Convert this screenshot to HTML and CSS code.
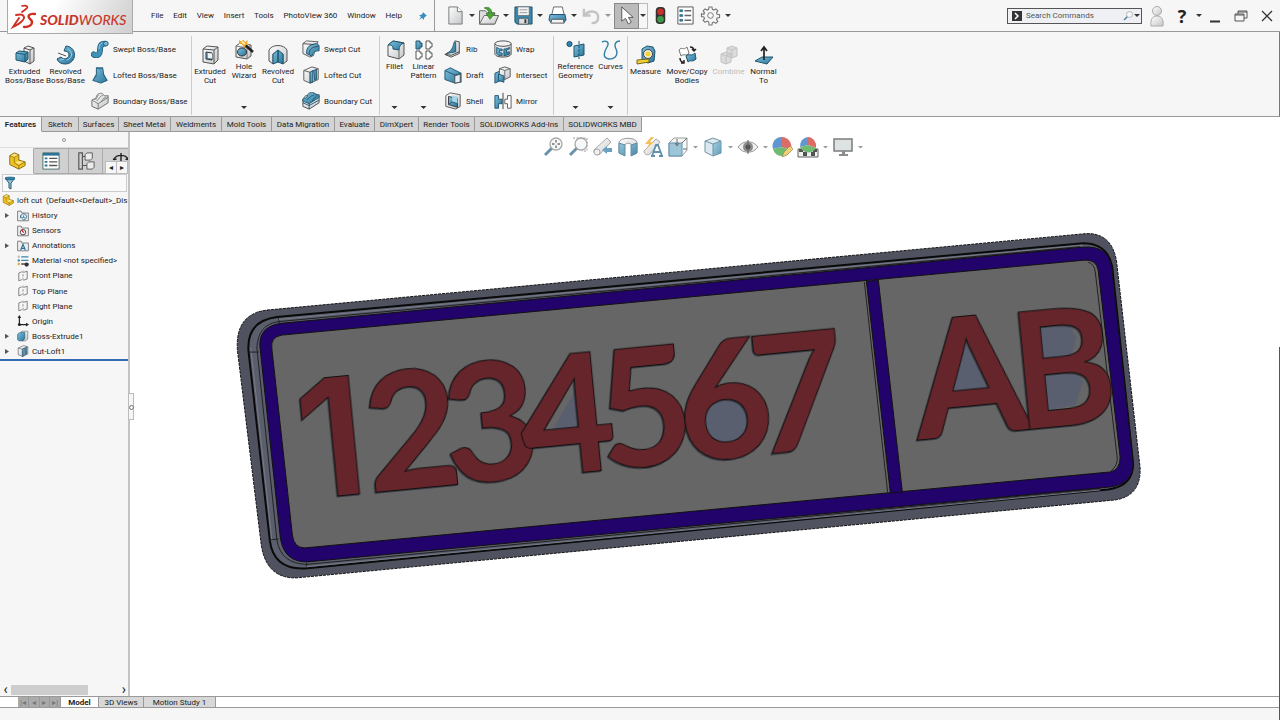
FILE: index.html
```html
<!DOCTYPE html>
<html lang="en">
<head>
<meta charset="utf-8">
<title>SOLIDWORKS - loft cut</title>
<link rel="stylesheet" href="styles.css">
</head>
<body>
<svg class="defs" aria-hidden="true">
  <defs>
    <linearGradient id="blue" x1="0" y1="0" x2="1" y2="1"><stop offset="0" stop-color="#7fc0de"/><stop offset="1" stop-color="#2a7499"/></linearGradient>
    <linearGradient id="grey" x1="0" y1="0" x2="1" y2="1"><stop offset="0" stop-color="#fff"/><stop offset="1" stop-color="#c4c6c8"/></linearGradient>
  </defs>
  <symbol id="i-part" viewBox="0 0 20 20"><path d="M2 4l5-3 5 2v6l7 2v4l-7 4-10-5z" fill="#f2c21c" stroke="#7d6414" stroke-linejoin="round"/><path d="M2 4l5 2 5-3M7 6v6l5 3 7-4M12 15v4" fill="none" stroke="#9a7a12"/><path d="M3 4l4-2 4 1.200-4 2zM8 11.500l4-1.500 5 1.200-5 2.600z" fill="#fbe387"/></symbol>
  <symbol id="i-extrude" viewBox="0 0 20 20"><path d="M9 3l4-2 6 2v13l-4 3-6-3z" fill="url(#grey)" stroke="#555"/><path d="M15 5l4-2M15 5v14M9 3l6 2" fill="none" stroke="#555"/><path d="M1 8l3-2 9 1v7l-3 3-9-2z" fill="url(#blue)" stroke="#1d556f"/><path d="M1 8l9 1.500 3-2M10 9.500V17" fill="none" stroke="#1d556f"/></symbol>
  <symbol id="i-revolve" viewBox="0 0 20 20"><path d="M10 1c12 1 11 18-1 18-4 0-7-2-8-5l4-2c2 3 8 2 8-2 0-3-2-4-5-4z" fill="url(#blue)" stroke="#1d556f"/><path d="M12 4c5 3 5 9-1 11M4 15l4-1" fill="none" stroke="#9fd2e8"/><path d="M2 8l8 3" stroke="#555"/></symbol>
  <symbol id="i-sweep" viewBox="0 0 20 20"><path d="M3 16c5 3 7-1 7-5 0-4 1-7 5-7" fill="none" stroke="#1d556f" stroke-width="6.500" stroke-linecap="round"/><path d="M3 16c5 3 7-1 7-5 0-4 1-7 5-7" fill="none" stroke="#3f91b8" stroke-width="5" stroke-linecap="round"/><circle cx="16.500" cy="4" r="2.600" fill="#78b9d6" stroke="#1d556f"/><path d="M9 10c0-4 1-6 4-7" stroke="#9fd2e8" fill="none"/></symbol>
  <symbol id="i-loft" viewBox="0 0 20 20"><path d="M6 2h7l1 7 4 7-7 3-9-3 4-7z" fill="url(#blue)" stroke="#1d556f"/><path d="M6 2l4 1.500L13 2M2 16l5-6M18 16l-5-7" fill="none" stroke="#2b6d8c"/></symbol>
  <symbol id="i-boundary" viewBox="0 0 20 20"><path d="M1 9c2-2 4 0 5-4 1-4 6-4 7-3s0 3 6 2v8l-11 7-7-3z" fill="url(#grey)" stroke="#666"/><path d="M1 9l7 4 11-7M8 13v6M6 9c3 1 3-5 7-5M3 8c4 1 3-3 6-5M11 11c2-1 2-5 6-5" fill="none" stroke="#777"/></symbol>
  <symbol id="i-boundcut" viewBox="0 0 20 20"><path d="M1 8l3-4 6 1 3-4 6 3v8l-11 7-7-3z" fill="url(#grey)" stroke="#444"/><path d="M1 8c2-2 4 0 5-4 1-4 6-4 7-3s0 3 6 2v3L8 13 1 10z" fill="url(#blue)" stroke="#1d556f"/><path d="M1 12l7 3 11-6M8 13v6M5 8c3 1 4-5 8-4M11 10c2-1 2-4 5-5" fill="none" stroke="#1d556f"/></symbol>
  <symbol id="i-excut" viewBox="0 0 20 20"><path d="M3 4l4-3 11 1v13l-4 4-11-2z" fill="url(#grey)" stroke="#555"/><path d="M3 4l11 1 4-3M14 5v14" fill="none" stroke="#555"/><path d="M6 7l6 1v7l-6-1z" fill="url(#blue)" stroke="#333"/><path d="M8 8l4 .5v5L8 13z" fill="#eef3f5"/></symbol>
  <symbol id="i-hole" viewBox="0 0 20 20"><path d="M2 6l4-3 11 2v11l-4 3-11-2z" fill="url(#grey)" stroke="#555"/><path d="M2 6l11 2 4-3M13 8v11" fill="none" stroke="#777"/><ellipse cx="8" cy="12" rx="4.500" ry="4" fill="url(#blue)" stroke="#333"/><path d="M9 3l10 9" stroke="#222" stroke-width="2.500"/><path d="M5 0l3 2 1-3 2 3 3-2-1 3 2 2-3 0-2 3-2-4-3 0z" fill="#f2a52a"/><path d="M8 2l3 2" stroke="#fff4a0" stroke-width="2"/></symbol>
  <symbol id="i-revcut" viewBox="0 0 20 20"><path d="M1 5c3-6 15-6 18 0v11l-4 3V9L10 7 5 9v10l-4-3z" fill="url(#grey)" stroke="#555"/><path d="M5 9l5-4v12l-5 2zM15 9l-5-4v12l5 2z" fill="url(#blue)" stroke="#1d556f"/></symbol>
  <symbol id="i-sweepcut" viewBox="0 0 20 20"><path d="M1 4l4-3 13 1-3 5-2 10-4 2-8-4z" fill="url(#grey)" stroke="#555"/><path d="M5 15C5 8 8 5 16 4l3 2v6c-5 0-7 2-8 6z" fill="url(#blue)" stroke="#1d556f"/><path d="M8 16c0-6 3-8 10-9M1 4l12 1" fill="none" stroke="#444"/></symbol>
  <symbol id="i-loftcut" viewBox="0 0 20 20"><path d="M2 5l9-4 7 2v12l-9 4-7-3z" fill="url(#grey)" stroke="#555"/><path d="M2 5l7 2 9-4M9 7v12" fill="none" stroke="#555"/><path d="M9 7l3-2v13l-3 1zM13 5l3-1v11l-2 1z" fill="url(#blue)" stroke="#1d556f"/></symbol>
  <symbol id="i-fillet" viewBox="0 0 20 20"><path d="M3 5l5-4 11 2v12l-5 4-11-3z" fill="url(#grey)" stroke="#555"/><path d="M3 5l5-4 11 2c-3 1-5 3-5 7L8 9c0-3-1-4-5-4z" fill="url(#blue)" stroke="#1d556f"/><path d="M14 9v10" stroke="#666"/></symbol>
  <symbol id="i-pattern" viewBox="0 0 20 20"><path d="M2 1h4v2h2v4H6v2H2z" fill="url(#blue)" stroke="#1d556f"/><path d="M12 1h4v2h2v4h-2v2h-4zM2 11h4v2h2v4H6v2H2zM12 11h4v2h2v4h-2v2h-4z" fill="#fff" stroke="#555"/></symbol>
  <symbol id="i-rib" viewBox="0 0 20 20"><path d="M12 1l5 1v13l-9 4-7-3 6-3 5-2z" fill="url(#grey)" stroke="#444"/><path d="M13 3v10L3 15c5-3 7-6 8-12z" fill="url(#blue)" stroke="#1d556f"/><path d="M1 16l7 1 9-4" fill="none" stroke="#444"/></symbol>
  <symbol id="i-draft" viewBox="0 0 20 20"><path d="M1 5l6-3 12 6v10l-7 1-11-4z" fill="url(#blue)" stroke="#1d556f"/><path d="M1 5l11 5 7-2M12 10v9" fill="none" stroke="#1d556f"/><path d="M12 11l6-2v9l-6 1z" fill="#e8eef1" stroke="#555"/></symbol>
  <symbol id="i-shell" viewBox="0 0 20 20"><path d="M2 4l5-3 11 2v13l-5 3-11-3z" fill="url(#grey)" stroke="#555"/><path d="M5 5l10 2v10L5 14z" fill="url(#blue)" stroke="#333"/><path d="M9 4l6 1v8l-6-2z" fill="#a6d3e7"/><path d="M5 14l4-3 6 2" fill="none" stroke="#1d556f"/></symbol>
  <symbol id="i-wrap" viewBox="0 0 20 20"><path d="M1 4v12c2 4 16 4 18 0V4z" fill="url(#grey)" stroke="#444"/><ellipse cx="10" cy="4" rx="9" ry="3" fill="#f3f3f3" stroke="#444"/><path d="M3 8c2 2 4 2 6 2v2l-3-.5V14l3 .5v3c-3 0-5-1-6-2zM11 10c3 0 5-1 6-2v2l-3 1v3l3-1v3l-6 1.500z" fill="url(#blue)" stroke="#1d556f"/></symbol>
  <symbol id="i-intersect" viewBox="0 0 20 20"><path d="M1 8l7-3v11l-7 3z" fill="url(#blue)" stroke="#1d556f"/><path d="M6 3l6-2 6 2v9l-6 3-6-3z" fill="url(#grey)" stroke="#555"/><path d="M6 3l6 2 6-2M12 5v10" fill="none" stroke="#666"/><path d="M5 9l6 2v7l-6-2z" fill="url(#blue)" stroke="#1d556f"/></symbol>
  <symbol id="i-mirror" viewBox="0 0 20 20"><path d="M1 4h4v4h4v5H5v5H1z" fill="url(#blue)" stroke="#1d556f"/><path d="M10 1v18" stroke="#333"/><path d="M19 4h-4v4h-3v5h3v5h4z" fill="#fff" stroke="#555"/></symbol>
  <symbol id="i-refgeo" viewBox="0 0 20 20"><circle cx="3.500" cy="4" r="2.600" fill="#2f83ab" stroke="#1d556f"/><path d="M8 6l10-2v11L8 17z" fill="url(#blue)" stroke="#1d556f"/><path d="M13 1v18" stroke="#1d556f" stroke-dasharray="3 1"/></symbol>
  <symbol id="i-curves" viewBox="0 0 20 20"><path d="M1 2c4-2 8 0 5 5s-5 11 2 12c8 0 9-6 7-10s-1-8 4-8" fill="none" stroke="#2f7fa5" stroke-width="1.400"/></symbol>
  <symbol id="i-measure" viewBox="0 0 20 20"><path d="M6 4l5-3 6 1 2 4-1 10-6 2-6-2z" fill="url(#blue)" stroke="#1d556f"/><circle cx="12" cy="9" r="4.500" fill="#f1efe2" stroke="#444"/><circle cx="12" cy="9" r="2.500" fill="#f2d231"/><path d="M1 15l12-1v3L1 19z" fill="#f2d231" stroke="#75661a"/></symbol>
  <symbol id="i-move" viewBox="0 0 20 20"><path d="M2 5c3-4 4 1 8-3l2 6c-3 4-5 0-8 3z" fill="#fff" stroke="#777"/><path d="M9 11c3-3 5 1 9-3l1 6c-4 4-5 0-8 3z" fill="url(#blue)" stroke="#1d556f"/><path d="M13 2c3 0 4 1 4 4m-2-2l2 2 2-2M3 13c0 3 1 4 4 5m-3 0h3v-3" fill="none" stroke="#222" stroke-width="1.500"/></symbol>
  <symbol id="i-combine" viewBox="0 0 20 20"><path d="M8 3l5-2 5 2v8l-5 2-5-2zM2 9l5-2 5 2v8l-5 2-5-2z" fill="#dcdcdc" stroke="#c2c2c2"/><path d="M8 3l5 2 5-2M13 5v8M2 9l5 2 5-2M7 11v8" fill="none" stroke="#c2c2c2"/></symbol>
  <symbol id="i-normal" viewBox="0 0 20 20"><path d="M1 16l7-4h11l-6 7z" fill="url(#blue)" stroke="#1d556f"/><path d="M10 15V3M7 6l3-4 3 4" fill="none" stroke="#222" stroke-width="1.700"/></symbol>
  <symbol id="i-list" viewBox="0 0 20 20"><path d="M2 1h16v18H2z" fill="#fff" stroke="#555"/><path d="M4 4h3v2H4zM4 9h3v2H4zM4 14h3v2H4z" fill="#2f83ab" stroke="#1d556f" stroke-width=".6"/><path d="M9 5h7M9 10h7M9 15h7" stroke="#666" stroke-width="1.500"/></symbol>
  <symbol id="i-props" viewBox="0 0 20 20"><path d="M1 1h18v18H1z" fill="#fff" stroke="#466"/><path d="M1 1h18v3H1z" fill="#2a7499"/><path d="M3 7h3M3 11h3M3 15h3" stroke="#2a7499" stroke-width="2"/><path d="M8 7h9M8 11h9M8 15h9" stroke="#555" stroke-width="1.500"/></symbol>
  <symbol id="i-config" viewBox="0 0 20 20"><path d="M2 1h4v18H2zM6 5h4M6 15h5" fill="none" stroke="#555" stroke-width="1.300"/><path d="M9 3l2-2h6v6l-2 2H9zM11 13l2-2h6v6l-2 2h-6z" fill="#ececec" stroke="#555"/></symbol>
  <symbol id="i-folder" viewBox="0 0 20 20"><path d="M1 18V2h6l1 3h11v13z" fill="#eee" stroke="#777" stroke-width="1.500"/></symbol>
  <symbol id="i-plane" viewBox="0 0 20 20"><path d="M8 3L3 5v13l5-2M11 4l6-2v13l-6 2" fill="none" stroke="#777" stroke-width="1.500"/><path d="M10 1v18" stroke="#888" stroke-width="1.500" stroke-dasharray="4 2"/></symbol>
  <symbol id="i-glass" viewBox="0 0 20 20"><path d="M9 11l-7 7" stroke="#4f819b" stroke-width="3"/><circle cx="13" cy="7" r="6" fill="#f6f8f9" stroke="#999" stroke-width="1.300"/></symbol>
</svg>

<div class="app">
  <header class="titlebar">
    <div class="logo">
      <svg class="ds" viewBox="0 0 24 24" aria-hidden="true"><g fill="none" stroke="#cf2e20" stroke-linecap="round"><path d="M10 1c5-1 7 1 4 3L10 7" stroke-width="1.700"/><path d="M4 10c9-2 10 3 5 7-3 3-6 4-8 5l6-9" stroke-width="1.900"/><path d="M23 9c-6-1-8 2-5 5 4 3 2 8-6 8" stroke-width="2.300"/></g></svg>
      <span class="brand"><b>SOLID</b>WORKS</span>
    </div>
    <nav class="menu">
      <button>File</button><button>Edit</button><button>View</button><button>Insert</button><button>Tools</button><button>PhotoView 360</button><button>Window</button><button>Help</button>
    </nav>
    <button class="pin" aria-label="Pin menu"><svg viewBox="0 0 10 10"><path d="M5 1l4 4-1 0-2 2 0 2-2-2-3 2 2-3-2-2 2 0 2-2z" fill="#3a8fc0"/></svg></button>
    <div class="quick">
      <button class="q" aria-label="New"><svg viewBox="0 0 20 20"><path d="M3 1h9l5 5v13H3z" fill="url(#grey)" stroke="#777"/><path d="M12 1v5h5" fill="#fff" stroke="#777"/></svg></button><i class="dd"></i>
      <button class="q" aria-label="Open"><svg class="wide" viewBox="0 0 22 20"><path d="M1 19V5h6l2 2h8v3h4l-4 9z" fill="#ddd" stroke="#666"/><path d="M1 19l5-9h15l-4 9z" fill="url(#grey)" stroke="#666"/><path d="M6 2c6-2 8 2 8 6h3l-5 6-4-6h3c0-3-2-5-5-6z" fill="#4aa832" stroke="#2b6e1b" stroke-width=".7"/></svg></button><i class="dd"></i>
      <button class="q" aria-label="Save"><svg viewBox="0 0 20 20"><path d="M1 1h18v18H3l-2-2z" fill="#3d87ab" stroke="#1f4f68"/><path d="M4 1h12v9H4z" fill="#f4f4f4" stroke="#555" stroke-width=".6"/><path d="M5 13h10v6H5z" fill="#ddd" stroke="#333" stroke-width=".6"/><path d="M6 4h8M6 7h8" stroke="#999"/><path d="M11 14h2v4h-2z" fill="#333"/></svg></button><i class="dd"></i>
      <button class="q" aria-label="Print"><svg viewBox="0 0 20 20"><path d="M4 9l2-8h9l2 8z" fill="#fff" stroke="#666"/><path d="M2 9h16l1 6-2 2H3l-2-2z" fill="url(#blue)" stroke="#1d4f68"/><path d="M4 14h12l1 4H3z" fill="#f4f4f4" stroke="#555"/></svg></button><i class="dd"></i>
      <button class="q" aria-label="Undo" disabled><svg viewBox="0 0 20 20"><path d="M2 3v7h7M3 9c5-5 14-4 14 3 0 4-3 6-7 6" fill="none" stroke="#c3c3c3" stroke-width="2.500"/></svg></button><i class="dd pale"></i>
      <button class="q sel" aria-label="Select"><svg viewBox="0 0 20 20"><path d="M5 1v15l4-3 3 6 3-2-3-5h5z" fill="#fff" stroke="#555"/></svg></button><span class="boxed"><i class="dd"></i></span>
      <button class="q w24" aria-label="Rebuild"><svg viewBox="0 0 20 20"><rect x="5" y="1" width="10" height="18" rx="4" fill="#333"/><circle cx="10" cy="6" r="3.500" fill="#c9312b"/><circle cx="10" cy="14" r="3.500" fill="#3f9a45"/></svg></button>
      <button class="q w26" aria-label="File properties"><svg><use href="#i-list"/></svg></button>
      <button class="q w24" aria-label="Options"><svg viewBox="0 0 20 20"><g fill="none" stroke="#777"><circle cx="10" cy="10" r="3"/><path d="M8.500 1h3l.5 2.500 1.500.7L15.700 3l2 2-1.400 2.200.7 1.500 2.500.4v3l-2.500.5-.7 1.500 1.400 2.100-2 2-2.200-1.300-1.500.7-.5 2.400h-3L8 16.600l-1.500-.7-2.200 1.300-2-2 1.400-2.100-.7-1.500-2.500-.5v-3L3 8.700l.7-1.500L2.300 5l2-2 2.200 1.200L8 3.500z" stroke-width="1.200"/></g></svg></button><i class="dd"></i>
    </div>
    <div class="search">
      <svg viewBox="0 0 10 10" aria-hidden="true"><path d="M0 0h10v10H0z" fill="#333"/><path d="M3 2l3 3-3 3" fill="none" stroke="#fff" stroke-width="1.500"/></svg>
      <input type="text" placeholder="Search Commands" aria-label="Search Commands">
      <svg viewBox="0 0 20 20" aria-hidden="true"><use href="#i-glass"/></svg><i class="dd"></i>
    </div>
    <div class="window">
      <button class="w-user" aria-label="Account"><svg viewBox="0 0 14 22"><path d="M1 21c-1-7 2-10 6-10s7 3 6 10z" fill="url(#grey)" stroke="#aaa"/><circle cx="7" cy="6" r="4.500" fill="url(#grey)" stroke="#aaa"/></svg></button>
      <button class="w-help" aria-label="Help">?</button><i class="dd"></i>
      <button class="w-min" aria-label="Minimize"><svg viewBox="0 0 14 14"><path d="M2 12.500h10" stroke="#333" stroke-width="2"/></svg></button>
      <button class="w-btn" aria-label="Restore"><svg viewBox="0 0 14 14"><path d="M1 5h9v7H1zM1 6h9M4 5V2h9v7h-3M4 3h9" fill="none" stroke="#555"/></svg></button>
      <button class="w-btn" aria-label="Close"><svg viewBox="0 0 14 14"><path d="M2 2l10 10M12 2L2 12" stroke="#333" stroke-width="1.300"/></svg></button>
    </div>
  </header>

  <section class="ribbon" aria-label="Features">
    <div class="group g1">
      <button class="big"><svg><use href="#i-extrude"/></svg>Extruded<br>Boss/Base</button>
      <button class="big"><svg><use href="#i-revolve"/></svg>Revolved<br>Boss/Base</button>
      <div class="stack">
        <button><svg><use href="#i-sweep"/></svg>Swept Boss/Base</button>
        <button><svg><use href="#i-loft"/></svg>Lofted Boss/Base</button>
        <button><svg><use href="#i-boundary"/></svg>Boundary Boss/Base</button>
      </div>
    </div>
    <div class="group g2">
      <button class="big"><svg><use href="#i-excut"/></svg>Extruded<br>Cut</button>
      <button class="big drop"><svg><use href="#i-hole"/></svg>Hole<br>Wizard<i class="dd"></i></button>
      <button class="big"><svg><use href="#i-revcut"/></svg>Revolved<br>Cut</button>
      <div class="stack">
        <button><svg><use href="#i-sweepcut"/></svg>Swept Cut</button>
        <button><svg><use href="#i-loftcut"/></svg>Lofted Cut</button>
        <button><svg><use href="#i-boundcut"/></svg>Boundary Cut</button>
      </div>
    </div>
    <div class="group g3">
      <button class="big drop"><svg><use href="#i-fillet"/></svg>Fillet<i class="dd"></i></button>
      <button class="big drop"><svg><use href="#i-pattern"/></svg>Linear<br>Pattern<i class="dd"></i></button>
      <div class="stack s50">
        <button><svg><use href="#i-rib"/></svg>Rib</button>
        <button><svg><use href="#i-draft"/></svg>Draft</button>
        <button><svg><use href="#i-shell"/></svg>Shell</button>
      </div>
      <div class="stack s0">
        <button><svg><use href="#i-wrap"/></svg>Wrap</button>
        <button><svg><use href="#i-intersect"/></svg>Intersect</button>
        <button><svg><use href="#i-mirror"/></svg>Mirror</button>
      </div>
    </div>
    <div class="group g4">
      <button class="big drop"><svg><use href="#i-refgeo"/></svg>Reference<br>Geometry<i class="dd"></i></button>
      <button class="big drop"><svg><use href="#i-curves"/></svg>Curves<i class="dd"></i></button>
    </div>
    <div class="group g5">
      <button class="big"><svg><use href="#i-measure"/></svg>Measure</button>
      <button class="big"><svg><use href="#i-move"/></svg>Move/Copy<br>Bodies</button>
      <button class="big" disabled><svg><use href="#i-combine"/></svg>Combine</button>
      <button class="big"><svg><use href="#i-normal"/></svg>Normal<br>To</button>
    </div>
  </section>

  <nav class="tabs">
    <button class="on">Features</button><button>Sketch</button><button>Surfaces</button><button>Sheet Metal</button><button>Weldments</button><button>Mold Tools</button><button>Data Migration</button><button>Evaluate</button><button>DimXpert</button><button>Render Tools</button><button>SOLIDWORKS Add-Ins</button><button>SOLIDWORKS MBD</button>
  </nav>

  <div class="work">
    <aside class="panel">
      <div class="grip"><span></span></div>
      <div class="ptabs">
        <button class="on" aria-label="FeatureManager"><svg><use href="#i-part"/></svg></button>
        <button aria-label="PropertyManager"><svg><use href="#i-props"/></svg></button>
        <button aria-label="ConfigurationManager"><svg><use href="#i-config"/></svg></button>
        <button aria-label="DimXpertManager"><svg viewBox="0 0 20 20"><path d="M2 9c2-7 14-7 16 0M10 1v15M1 8h4M15 8h4" fill="none" stroke="#222" stroke-width="1.600"/></svg></button>
        <div class="pager"><button aria-label="Previous">◂</button><button aria-label="Next">▸</button></div>
      </div>
      <label class="filter"><svg viewBox="0 0 12 14" aria-hidden="true"><path d="M1 2h10L7 7v6l-2-1V7z" fill="#9cc8de" stroke="#235b75"/><ellipse cx="6" cy="2.500" rx="5" ry="1.500" fill="#3482a8" stroke="#235b75" stroke-width=".6"/></svg><input type="text" aria-label="Filter tree"></label>
      <div class="root"><svg><use href="#i-part"/></svg>loft cut &nbsp;(Default&lt;&lt;Default&gt;_Dis</div>
      <ul class="tree">
        <li class="exp"><svg viewBox="0 0 20 20"><use href="#i-folder"/><path d="M6 12a5 5 0 1 1 3 4M6 9v4h4M11 9v4h3" fill="none" stroke="#2a7499" stroke-width="1.500"/></svg>History</li>
        <li><svg viewBox="0 0 20 20"><use href="#i-folder"/><circle cx="10" cy="12" r="4.500" fill="#fff" stroke="#333" stroke-width="1.500"/><path d="M10 12l-2-4M10 12h2" stroke="#c22" stroke-width="2"/></svg>Sensors</li>
        <li class="exp"><svg viewBox="0 0 20 20"><use href="#i-folder"/><path d="M6 17l4-10 4 10M7 14h6" fill="none" stroke="#246f98" stroke-width="1.800"/></svg>Annotations</li>
        <li><svg viewBox="0 0 20 20"><path d="M7 3h12M7 9h12" stroke="#3b86ab" stroke-width="2"/><path d="M7 15h12" stroke="#222" stroke-width="2"/><circle cx="3" cy="3" r="2" fill="#bbb"/><circle cx="3" cy="9" r="2" fill="#3b86ab"/><circle cx="3" cy="15" r="2" fill="#dba92c"/><circle cx="16" cy="16" r="3.500" fill="#333"/></svg>Material &lt;not specified&gt;</li>
        <li><svg><use href="#i-plane"/></svg>Front Plane</li>
        <li><svg><use href="#i-plane"/></svg>Top Plane</li>
        <li><svg><use href="#i-plane"/></svg>Right Plane</li>
        <li><svg viewBox="0 0 20 20"><path d="M4 2v14h13" fill="none" stroke="#222" stroke-width="2"/><path d="M1 5l3-5 3 5zM15 13l5 3-5 3z" fill="#222"/><circle cx="4" cy="16" r="2.500" fill="#222"/></svg>Origin</li>
        <li class="exp"><svg viewBox="0 0 20 20"><path d="M8 2h10v13l-4 3H8z" fill="url(#grey)" stroke="#666"/><path d="M1 7l4-3h8v10l-3 4H3l-2-2z" fill="url(#blue)" stroke="#1d556f"/></svg>Boss-Extrude1</li>
        <li class="exp"><svg><use href="#i-loftcut"/></svg>Cut-Loft1</li>
      </ul>
      <div class="rest"></div>
      <div class="hscroll"><span>‹</span><div></div><span>›</span></div>
      <button class="handle" aria-label="Collapse panel"></button>
    </aside>

    <main class="canvas">
      <div class="hud">
        <button aria-label="Zoom to fit"><svg viewBox="0 0 20 20"><use href="#i-glass"/><path d="M13 3v8M9 7h8" stroke="#555" stroke-width="1.400" stroke-dasharray="2.500 3"/></svg></button>
        <button aria-label="Zoom to area"><svg viewBox="0 0 20 20"><path d="M5 1h14v13h-5" fill="none" stroke="#888" stroke-dasharray="2 1.500"/><use href="#i-glass"/></svg></button>
        <button aria-label="Previous view"><svg viewBox="0 0 20 20"><path d="M1 13L14 1l4 4L7 17c-3 2-7 0-6-4z" fill="url(#grey)" stroke="#999"/><circle cx="4" cy="15" r="3" fill="#eee" stroke="#999"/><path d="M9 13l5-4v2h5v4h-5v2z" fill="#4f92b4"/></svg></button>
        <button aria-label="Section view"><svg viewBox="0 0 20 20"><path d="M1 5c2-5 16-5 18 0v11l-4 2V8L10 6 6 8v10l-5-2z" fill="url(#grey)" stroke="#888"/><path d="M1 6l6 2v11l-6-3zM13 8l6-2v10l-6 3z" fill="url(#blue)" stroke="#4a7c95"/></svg></button>
        <button aria-label="Annotation view"><svg viewBox="0 0 20 20"><path d="M1 14L13 2l4 3L7 17c-3 2-6 0-6-3z" fill="url(#grey)" stroke="#999"/><path d="M8 0L2 7h4l-3 5 8-7H7l4-5z" fill="#f1b53c"/><path d="M9 19l4-11h2l4 11M11 15h6M8 19h4M16 19h4" fill="none" stroke="#427f9f" stroke-width="1.800"/></svg></button>
        <button aria-label="View orientation"><svg viewBox="0 0 20 20"><path d="M1 6l5-5h13v12l-5 6H1z" fill="#f5f5f5" stroke="#888"/><path d="M1 6h13v13H1z" fill="#8dbcd2" stroke="#427f9f"/><path d="M14 6l5-5M9 2v6M7 6l2 3 2-3M19 12h-4" fill="none" stroke="#555"/></svg></button><i class="dd pale"></i>
        <button aria-label="Display style"><svg viewBox="0 0 20 20"><path d="M2 4l8-3 8 3v12l-8 3-8-4z" fill="#d4e5ed" stroke="#5a8095"/><path d="M10 7l8-3v12l-8 3z" fill="url(#blue)" opacity=".8"/><path d="M2 4l8 3 8-3M10 7v12" fill="none" stroke="#5a8095"/></svg></button><i class="dd pale"></i>
        <button aria-label="Hide/show"><svg viewBox="0 0 20 20"><path d="M0 10c5-7 15-7 20 0-5 7-15 7-20 0z" fill="#eee" stroke="#888"/><circle cx="10" cy="10" r="5" fill="#777"/><circle cx="10" cy="10" r="2.500" fill="#333"/><path d="M10 3v14" stroke="#444"/></svg></button><i class="dd pale"></i>
        <button aria-label="Edit appearance"><svg viewBox="0 0 20 20"><path d="M9 10V0a9 9 0 0 0-9 12z" fill="#4686c9"/><path d="M9 10V0a10 10 0 0 1 9 13z" fill="#d9534c"/><path d="M9 10l9 3a9.500 9.500 0 0 1-18-1z" fill="#56ad58"/><path d="M9 20l2-5 6-6 3 3-6 6z" fill="#edc85c" stroke="#8a743a" stroke-width=".7"/></svg></button>
        <button aria-label="Apply scene"><svg viewBox="0 0 20 20"><path d="M0 12h20v8H0z" fill="#eee" stroke="#444"/><path d="M1 12h4v3H1zM15 12h4v3h-4zM5 15h4v4H5zM13 15h4v4h-4z" fill="#333"/><path d="M10 8V0a9 9 0 0 0-8 10z" fill="#4686c9"/><path d="M10 8V0a9 9 0 0 1 8 11z" fill="#d9534c"/><path d="M10 8l8 3a9 9 0 0 1-16-1z" fill="#56ad58"/></svg></button><i class="dd pale"></i>
        <button aria-label="View settings"><svg viewBox="0 0 20 20"><path d="M1 2h18v12H1z" fill="#d8dddf" stroke="#666" stroke-width="1.500"/><path d="M9 14h3v3h3v2H6v-2h3z" fill="#777"/></svg></button><i class="dd pale"></i>
      </div>
      <svg class="model" viewBox="129 162 1151 534" preserveAspectRatio="xMidYMid meet" role="img" aria-label="Number plate 1234567 AB">
        <path class="rim" d="M266 310L1085 233.500Q1112 232 1116.500 262L1140 468Q1141 496 1115 500L296 578Q266 579 260.500 546L236.500 350Q234 314 266 310Z"/>
        <path class="bevel" d="M276 317L1083 243Q1107 243 1112 266L1133 464Q1133 486 1108 489.500L304 568.500Q273 570 269 541L247.500 350Q246 321 276 317Z"/>
        <path class="ridge" d="M276 319.500L1083 245M304 567L1100 490M250 348L271 541"/>
        <path class="groove" d="M278 321.500L1080 246.500M306 564.500L1100 488.500M256 348Q257 324 278 321.500M256 348L276 540Q280 564 306 564.500M277 318l2 5M249 352h9M270 540l8-1M306 563l-1 5"/>
        <path class="border" d="M283 323L1083 247Q1108 245 1111.500 267L1133 463Q1133 484 1110 487L306 562Q283 562 279.500 538L259 346Q258 325 283 323Z"/>
        <path class="face" d="M281 335L1084 260Q1096 259 1098 270L1120 457Q1120 470 1110 472L304 548Q293 548 291.500 535L271 349Q269 337 281 335Z"/>
        <path class="edge" d="M1088 262q6 2 7 9l22 186q1 8-6 14M864 282l23.500 212"/>
        <path class="border" d="M866 281l12-1 24 212-12 1z"/>
        <g class="well"><circle cx="727" cy="424" r="26"/><path d="M577 386l6 50-36 3zM963 336l-18 58 44-4zM1034 322l32-3 10 18-6 25 13 20-8 23-34 6z"/></g>
        <g transform="translate(332 496) rotate(-5.500)">
          <text class="relief" y="0"><tspan class="one" x="4">1</tspan><tspan x="85">2</tspan><tspan x="164">3</tspan><tspan x="241">4</tspan><tspan x="319">5</tspan><tspan x="399">6</tspan><tspan x="493">7</tspan> <tspan x="646">A</tspan><tspan class="bee" x="740">B</tspan></text>
        </g>
      </svg>
    </main>
  </div>

  <footer class="bottom">
    <div class="nav"><button aria-label="First">|◂</button><button aria-label="Back">◂</button><button aria-label="Forward">▸</button><button aria-label="Last">▸|</button></div>
    <button class="on">Model</button><button>3D Views</button><button>Motion Study 1</button>
  </footer>
  <div class="status"></div>
</div>
</body>
</html>
```
FILE: styles.css
```css
* { box-sizing: border-box; }
body { margin: 0; font: 8px/9px Roboto, "Open Sans", sans-serif; color: #222; }
button { border: 0; padding: 0; margin: 0; background: none; font: inherit; color: inherit; white-space: nowrap; }
input { border: 0; padding: 0; background: none; font: inherit; min-width: 0; outline: 0; }
svg { display: block; flex: none; overflow: visible; }
.defs { position: absolute; width: 0; height: 0; }
.app { position: relative; min-height: 100vh; display: flex; flex-direction: column; background: #f6f6f6; }
.app::after { content: ""; position: absolute; right: 0; top: 347px; bottom: 0; width: 1px; background: #555; }

.dd { display: block; flex: none; width: 12px; height: 3px; background: #333; clip-path: polygon(calc(50% - 3px) 0, calc(50% + 3px) 0, 50% 100%); }
.dd.pale { opacity: .5; }

.titlebar { display: flex; align-items: center; height: 32px; border-bottom: 1px solid #999; }
.logo { display: flex; align-items: center; align-self: flex-start; gap: 4px; width: 126px; height: 34px; margin-left: 7px; padding: 0 4px; background: linear-gradient(115deg, #fff 35%, #cfcfcf); border: 1px solid #aaa; border-top: 0; z-index: 1; }
.ds { width: 24px; height: 24px; }
.brand { font: 500 14px/18px Lato, sans-serif; font-style: italic; color: #c8352b; padding-top: 6px; }
.brand b { font-weight: 900; }
.menu { display: flex; justify-content: space-between; width: 251px; margin-left: 18px; height: 32px; }
.pin { width: 10px; margin-left: 16px; }
.pin svg { width: 10px; height: 10px; }
.quick { display: flex; align-items: center; align-self: stretch; margin-left: 6px; padding-left: 9px; border-left: 1px solid #999; }
.q { display: flex; align-items: center; justify-content: center; width: 22px; height: 26px; }
.q svg { width: 19px; height: 19px; }
.q .wide { width: 22px; }
.q.sel { width: 25px; background: #bbb; border: 1px solid #888; }
.boxed { display: flex; align-items: center; width: 9px; height: 26px; border: 1px solid #bbb; border-left: 0; }
.boxed .dd { width: 8px; }
.q.w26 { width: 26px; }
.q.w24 { width: 24px; }
.search { display: flex; align-items: center; width: 135px; height: 16px; margin-left: auto; padding-left: 4px; border: 1px solid #555; background: #eef0f4; gap: 4px; }
.search svg { width: 10px; height: 10px; }
.search input { flex: 1; }
.search .dd { width: 8px; margin-left: -4px; }
.search input::placeholder { color: #555; opacity: 1; }
.window { display: flex; align-items: center; margin-left: 8px; padding-right: 6px; }
.window svg { width: 14px; height: 14px; }
.window .w-user svg { height: 22px; }
.w-help { width: 30px; margin-left: 3px; font: 700 18px/20px "Open Sans", sans-serif; }
.window .dd { margin: 0 3px 0 -4px; }
.w-btn { margin-left: 12px; }

.ribbon { display: flex; min-height: 85px; border-bottom: 1px solid #999; border-right: 1px solid #777; }
.group { display: flex; border-right: 1px solid #ccc; margin: 4px 0 1px; }
.big { display: flex; flex-direction: column; align-items: center; justify-content: flex-start; padding-top: 9px; text-align: center; }
.big svg { width: 20px; height: 20px; margin-bottom: 2px; }
.big.drop { padding-top: 4px; padding-bottom: 6px; }
.big .dd { margin-top: auto; }
.big:disabled { color: #bbb; }
.stack { display: grid; grid-template-rows: repeat(3, 26px); margin-left: 5px; }
.stack button { display: flex; align-items: center; gap: 4px; }
.stack svg { width: 18px; height: 18px; }
.g1 { width: 192px; padding-left: 4px; } .g1 .big { width: 41px; }
.g2 { width: 188px; padding-left: 1px; } .g2 .big { width: 34px; } .g2 .stack { margin-left: 7px; }
.g3 { width: 174px; } .g3 .big { width: 29px; } .g3 .stack { margin-left: 6px; }
.g3 .s50 { width: 50px; } .g3 .stack.s0 { margin-left: 0; }
.g4 { width: 74px; padding-left: 1px; } .g4 .big { width: 41px; } .g4 .big + .big { width: 29px; }
.g5 { border: 0; } .g5 .big { width: 35px; } .g5 .big:nth-child(2) { width: 48px; }

.tabs { display: grid; grid-template-columns: 42px 37px 40px 52px 51px 50px 63px 40px 44px 56px 89px 78px; height: 15px; background: #fff; }
.tabs button { background: #d4d4d4; border: solid #999; border-width: 0 1px 1px 0; }
.tabs .on { background: #f6f6f6; border-bottom-color: #f6f6f6; font-weight: 600; }

.work { display: flex; flex: 1; min-height: 0; }
.panel { position: relative; display: flex; flex-direction: column; width: 130px; border-right: 2px solid #c4c4c4; }
.grip { display: flex; align-items: center; justify-content: center; height: 16px; border-bottom: 1px solid #ddd; }
.grip span { width: 4px; height: 4px; border: 1px solid #999; border-radius: 50%; }
.ptabs { position: relative; display: grid; grid-template-columns: 34px 35px 34px 25px; height: 26px; overflow: hidden; }
.ptabs > button { display: flex; align-items: center; justify-content: center; background: #d0d0d0; border: 1px solid #aaa; border-left: 0; }
.ptabs > .on { background: #f6f6f6; border-color: #f6f6f6 #aaa #f6f6f6 transparent; }
.ptabs svg { width: 18px; height: 18px; }
.ptabs > button:nth-child(4) { padding-left: 10px; border-right: 0; }
.pager { position: absolute; right: 0; bottom: 0; display: flex; width: 23px; height: 13px; background: #f6f6f6; border: 1px solid #bbb; }
.pager button { flex: 1; }
.pager button + button { border-left: 1px solid #bbb; }
.filter { display: flex; align-items: center; height: 18px; margin: 0 1px 0 2px; padding-left: 1px; border: 1px solid #ccc; background: #fafafa; }
.filter svg { width: 12px; height: 14px; }
.filter input { flex: 1; }
.root { display: flex; align-items: center; gap: 3px; height: 16px; padding-left: 2px; white-space: nowrap; }
.root svg { width: 12px; height: 12px; }
.tree { display: grid; grid-auto-rows: 1fr; height: 153px; margin: 0; padding: 0; list-style: none; border-bottom: 2px solid #3569b3; }
.tree li { display: flex; align-items: center; gap: 3px; padding-left: 17px; white-space: nowrap; }
.tree li.exp { padding-left: 5px; }
.tree li.exp::before { content: ""; width: 4px; height: 5px; margin-right: 5px; background: #555; clip-path: polygon(0 0, 100% 50%, 0 100%); }
.tree svg { width: 12px; height: 12px; }
.rest { flex: 1; }
.hscroll { display: grid; grid-template-columns: 11px 77px 1fr; height: 12px; }
.hscroll div { background: #cdcdcd; margin: 1px 0; }
.hscroll span { text-align: center; font-size: 14px; line-height: 10px; }
.hscroll span:last-child { text-align: right; padding-right: 2px; }
.handle { position: absolute; right: -6px; top: 261px; width: 6px; height: 27px; background: #f6f6f6; border: 1px solid #bbb; }
.handle::after { content: ""; position: absolute; left: 0; top: 11px; width: 3px; height: 3px; border: 1px solid #777; border-radius: 50%; }

.canvas { display: flex; flex-direction: column; flex: 1; min-width: 0; background: #fff; }
.hud { display: flex; align-items: center; justify-content: center; height: 30px; padding-right: 4px; }
.hud button { display: flex; justify-content: center; width: 25px; }
.hud svg { width: 20px; height: 20px; opacity: .85; }
.hud .dd { width: 10px; }
.model { flex: 1; width: 100%; min-height: 0; }
.rim { fill: #50535f; stroke: #111; stroke-dasharray: 3 1; }
.bevel { fill: #5b5e6c; stroke: #0a0a0a; stroke-width: 2; }
.ridge { fill: none; stroke: #777b8a; stroke-width: 1; }
.groove { fill: none; stroke: #222; }
.border { fill: #22026b; stroke: #111; }
.face { fill: #666; stroke: #111; }
.edge { fill: none; stroke: #222; }
.well { fill: #5a5f70; }
.relief { font: 700 164px Lato, sans-serif; text-anchor: middle; fill: #66252a; stroke: #111; stroke-width: 2; paint-order: stroke; filter: drop-shadow(-1px 1px 0 #3a3c44); }
.relief .one { font: 600 162px Inter, sans-serif; }
.relief .bee { font: 600 164px "Open Sans", sans-serif; }

.bottom { display: flex; height: 12px; padding-left: 18px; background: #fff; border: solid #999; border-width: 1px 0; }
.bottom > button { background: #d8d8d8; border-right: 1px solid #999; width: 72px; }
.bottom > button:nth-child(3) { width: 45px; }
.bottom > .on { width: 38px; background: #fff; font-weight: 700; }
.nav { display: grid; grid-template-columns: repeat(4, 1fr); width: 43px; background: #aaa; color: #777; }
.nav button { border-right: 1px solid #999; }
.status { height: 12px; }
```
